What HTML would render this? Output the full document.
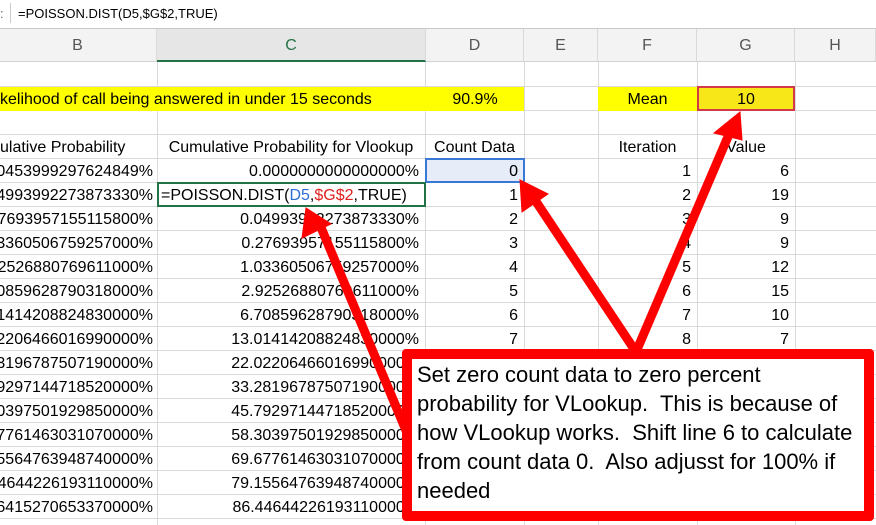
<!DOCTYPE html>
<html><head><meta charset="utf-8"><style>
body{margin:0;width:876px;height:525px;overflow:hidden;background:#fff;font-family:"Liberation Sans",sans-serif;position:relative}
.fb{position:absolute;left:0;top:0;width:876px;height:28px;border-bottom:1px solid #c8c8c8;background:#fff;font-size:13px}
.hdr{position:absolute;top:29px;height:33px;background:#f3f3f3;border-bottom:1px solid #d0d0d0;border-right:1px solid #d9d9d9;box-sizing:border-box;text-align:center;line-height:33px;font-size:16px;color:#555}
.c{position:absolute;height:24px;line-height:26px;font-size:16px;white-space:nowrap;overflow:hidden;color:#000;box-sizing:border-box}
.r{text-align:right;padding-right:6px}
.ctr{text-align:center}
.vl{position:absolute;top:62px;bottom:0;width:1px;background:#dadada}
.hl{position:absolute;left:0;right:0;height:1px;background:#dadada}
</style></head><body>
<div class="fb"><span style="position:absolute;left:0;top:6px;color:#666">:</span><span style="position:absolute;left:10px;top:3px;width:1px;height:20px;background:#ccc"></span><span style="position:absolute;left:18px;top:6px">=POISSON.DIST(D5,$G$2,TRUE)</span></div>
<div class="hdr" style="left:-1px;width:158px">B</div>
<div class="hdr" style="left:157px;width:269px;color:#217346;border-bottom:2px solid #217346;background:#e6e6e6">C</div>
<div class="hdr" style="left:426px;width:98px">D</div>
<div class="hdr" style="left:524px;width:74px">E</div>
<div class="hdr" style="left:598px;width:99px">F</div>
<div class="hdr" style="left:697px;width:98px">G</div>
<div class="hdr" style="left:795px;width:81px">H</div>
<div id="grid"></div>
<div class="vl" style="left:157px"></div><div class="vl" style="left:425px"></div><div class="vl" style="left:524px"></div><div class="vl" style="left:598px"></div><div class="vl" style="left:697px"></div><div class="vl" style="left:795px"></div>
<script>
var g=document.getElementById('grid'),h='';
for(var y=86;y<525;y+=24)h+='<div class="hl" style="top:'+y+'px"></div>';
g.innerHTML=h;
</script>
<div class="c" style="left:0;top:87px;width:524px;background:#ffff00">kelihood of call being answered in under 15 seconds</div>
<div class="c ctr" style="left:426px;top:87px;width:98px;background:#ffff00">90.9%</div>
<div class="c ctr" style="left:598px;top:87px;width:99px;background:#ffff00">Mean</div>
<div class="c ctr" style="left:697px;top:86px;width:98px;height:25px;background:#f7e718;border:2px solid #d23a4a;line-height:23px">10</div>
<div class="c" style="left:0;top:135px;width:157px">ulative Probability</div>
<div class="c ctr" style="left:157px;top:135px;width:268px">Cumulative Probability for Vlookup</div>
<div class="c ctr" style="left:425px;top:135px;width:99px">Count Data</div>
<div class="c ctr" style="left:598px;top:135px;width:99px">Iteration</div>
<div class="c ctr" style="left:697px;top:135px;width:98px">Value</div>
<div id="rows"></div>
<script>
var B=["0453999297624849%","4993992273873330%","7693957155115800%","3360506759257000%","2526880769611000%","0859628790318000%","1414208824830000%","2206466016990000%","3196787507190000%","9297144718520000%","0397501929850000%","7761463031070000%","5564763948740000%","4644226193110000%","6415270653370000%"];
var C=["0.0000000000000000%","","0.04993992273873330%","0.27693957155115800%","1.03360506759257000%","2.92526880769611000%","6.70859628790318000%","13.01414208824830000%","22.02206466016990000%","33.28196787507190000%","45.79297144718520000%","58.30397501929850000%","69.67761463031070000%","79.15564763948740000%","86.44644226193110000%"];
var F=[1,2,3,4,5,6,7,8],G=[6,19,9,9,12,15,10,7];
var s='';
for(var i=0;i<15;i++){var t=159+24*i;
s+='<div class="c" style="left:-3px;top:'+t+'px;width:160px;text-align:right;padding-right:4px;direction:rtl"><span style="direction:ltr;unicode-bidi:bidi-override">'+B[i]+'</span></div>';
if(C[i])s+='<div class="c r" style="left:157px;top:'+t+'px;width:268px">'+C[i]+'</div>';
if(i<12)s+='<div class="c r" style="left:425px;top:'+t+'px;width:99px">'+i+'</div>';
if(i<8){s+='<div class="c r" style="left:598px;top:'+t+'px;width:99px">'+F[i]+'</div>';s+='<div class="c r" style="left:697px;top:'+t+'px;width:98px">'+G[i]+'</div>';}
}
document.getElementById('rows').innerHTML=s;
</script>
<div style="position:absolute;left:425px;top:158px;width:100px;height:25px;background:rgba(220,230,245,0.7);border:2px solid #3a78d6;box-sizing:border-box"></div>
<div class="c r" style="left:425px;top:159px;width:99px">0</div>
<div class="c" style="left:157px;top:182px;width:269px;height:25px;border:2px solid #217346;background:#fff;padding-left:2px;line-height:23px">=POISSON.DIST(<span style="color:#2d6fd6">D5</span>,<span style="color:#e02020">$G$2</span>,TRUE)</div>
<svg style="position:absolute;left:0;top:0" width="876" height="525">
<g fill="#ff0000" stroke="#ff0000">
<line x1="636" y1="352" x2="535" y2="200" stroke-width="9"/>
<polygon points="520,180 522,212 548,194" stroke-width="1"/>
<line x1="636" y1="352" x2="730" y2="132" stroke-width="9"/>
<polygon points="740,112 714,133 742,140" stroke-width="1"/>
<line x1="410" y1="440" x2="320" y2="225" stroke-width="9"/>
<polygon points="306,208 302,238 331,224" stroke-width="1"/>
</g>
</svg>
<div style="position:absolute;left:402px;top:349px;width:472px;height:172px;border:10px solid #ff0000;border-radius:4px;box-sizing:border-box;background:#fff"></div>
<div style="position:absolute;left:417px;top:360px;width:445px;font-size:22px;line-height:29px;color:#000">Set zero count data to zero percent probability for VLookup.&nbsp; This is because of how VLookup works.&nbsp; Shift line 6 to calculate from count data 0.&nbsp; Also adjusst for 100% if needed</div>
</body></html>
